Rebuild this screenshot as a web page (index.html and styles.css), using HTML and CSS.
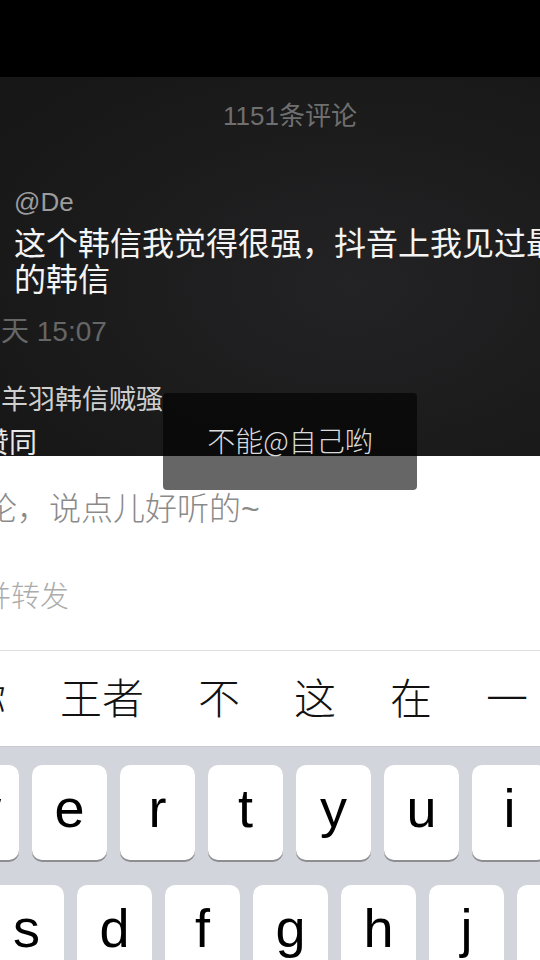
FILE: index.html
```html
<!DOCTYPE html>
<html lang="zh-CN">
<head>
<meta charset="utf-8">
<title>评论</title>
<link rel="stylesheet" href="styles.css">
</head>
<body>
<div class="screen">
  <div class="topbar"></div>
  <section class="panel">
    <div class="title">1151条评论</div>
    <div class="comment">
      <div class="mention">@De</div>
      <div class="text">这个韩信我觉得很强，抖音上我见过最强</div>
      <div class="text">的韩信</div>
      <div class="time">今天 15:07</div>
    </div>
    <div class="reply">
      <div class="reply-name">羊羽韩信贼骚</div>
      <div class="reply-text">赞同</div>
    </div>
  </section>
  <section class="input-area">
    <div class="placeholder">评论，说点儿好听的~</div>
    <div class="forward">并转发</div>
  </section>
  <div class="candidates">
    <span>你</span><span>王者</span><span>不</span><span>这</span><span>在</span><span>一</span>
  </div>
  <div class="keyboard">
    <div class="row row1">
      <div class="key">w</div><div class="key">e</div><div class="key">r</div><div class="key">t</div><div class="key">y</div><div class="key">u</div><div class="key">i</div>
    </div>
    <div class="row row2">
      <div class="key">s</div><div class="key">d</div><div class="key">f</div><div class="key">g</div><div class="key">h</div><div class="key">j</div><div class="key">k</div>
    </div>
  </div>
  <div class="toast">不能@自己哟</div>
</div>
</body>
</html>
```
FILE: styles.css
```css
* { box-sizing: border-box; }
html, body {
  margin: 0;
  padding: 0;
  background: #000;
}
body {
  width: 540px;
  height: 960px;
  overflow: hidden;
  font-family: "Liberation Sans", "Noto Sans CJK SC", sans-serif;
}
.screen {
  position: relative;
  width: 540px;
  height: 960px;
  overflow: hidden;
  display: flex;
  flex-direction: column;
}
.topbar {
  height: 77px;
  flex: none;
  background: #000;
}
.panel {
  height: 379px;
  flex: none;
  overflow: hidden;
  background: radial-gradient(ellipse 80% 70% at 65% 55%, #232325 0%, #1c1c1d 55%, #171717 100%);
  white-space: nowrap;
}
.title {
  margin-top: 19px;
  height: 40px;
  line-height: 40px;
  padding-left: 40px;
  text-align: center;
  font-size: 26px;
  color: #6f6f6f;
}
.comment {
  margin-top: 48px;
  padding-left: 14px;
}
.mention {
  height: 36px;
  line-height: 36px;
  font-size: 26px;
  color: #9c9c9c;
}
.text {
  height: 36px;
  line-height: 36px;
  font-size: 32px;
  color: #f4f4f4;
}
.mention + .text { margin-top: 6px; }
.text:first-of-type { padding-left: 1px; }
.time {
  margin-top: 16px;
  margin-left: -41px;
  height: 36px;
  line-height: 36px;
  font-size: 28px;
  color: #666;
}
.reply {
  margin-top: 32px;
}
.reply-name {
  height: 36px;
  line-height: 36px;
  padding-left: 1px;
  font-size: 27px;
  color: #cfcfcf;
}
.reply-text {
  margin-top: 8px;
  margin-left: -19px;
  line-height: 36px;
  font-size: 28px;
  color: #e8e8e8;
}
.input-area {
  height: 195px;
  flex: none;
  background: #fff;
  border-bottom: 1px solid #dedede;
  padding-top: 33px;
  white-space: nowrap;
  overflow: hidden;
}
.placeholder {
  margin-left: -47px;
  height: 40px;
  line-height: 40px;
  font-size: 32px;
  font-weight: 300;
  color: #8a8a8a;
}
.forward {
  margin-top: 48px;
  margin-left: -18px;
  height: 40px;
  line-height: 40px;
  font-size: 29px;
  font-weight: 300;
  color: #ababab;
}
.candidates {
  height: 96px;
  flex: none;
  background: #fff;
  border-bottom: 1px solid #c9cbd0;
  display: flex;
  align-items: center;
  gap: 54px;
  margin-left: -36px;
  width: 620px;
  padding-bottom: 6px;
  font-family: "Noto Sans CJK SC", sans-serif;
  font-size: 42px;
  font-weight: 300;
  color: #111;
  white-space: nowrap;
}
.candidates span { flex: none; line-height: 1; }
.keyboard {
  flex: 1;
  background: #d2d5db;
  padding-top: 18px;
  display: flex;
  flex-direction: column;
  gap: 25px;
}
.row {
  display: flex;
  gap: 13px;
}
.row1 { margin-left: -56px; }
.row2 { margin-left: -11px; }
.key {
  flex: none;
  width: 75px;
  height: 95px;
  background: #fff;
  border-radius: 10px;
  box-shadow: 0 2px 0 #8d8e92;
  display: flex;
  align-items: center;
  justify-content: center;
  padding-bottom: 10px;
  font-family: "Liberation Sans", sans-serif;
  font-size: 54px;
  color: #000;
}
.toast {
  position: absolute;
  left: 163px;
  top: 393px;
  width: 254px;
  height: 97px;
  border-radius: 4px;
  background: rgba(0, 0, 0, 0.6);
  display: flex;
  align-items: center;
  justify-content: center;
  padding-bottom: 4px;
  font-family: "Noto Sans CJK SC", sans-serif;
  font-size: 28px;
  font-weight: 300;
  color: #dadada;
}
```
